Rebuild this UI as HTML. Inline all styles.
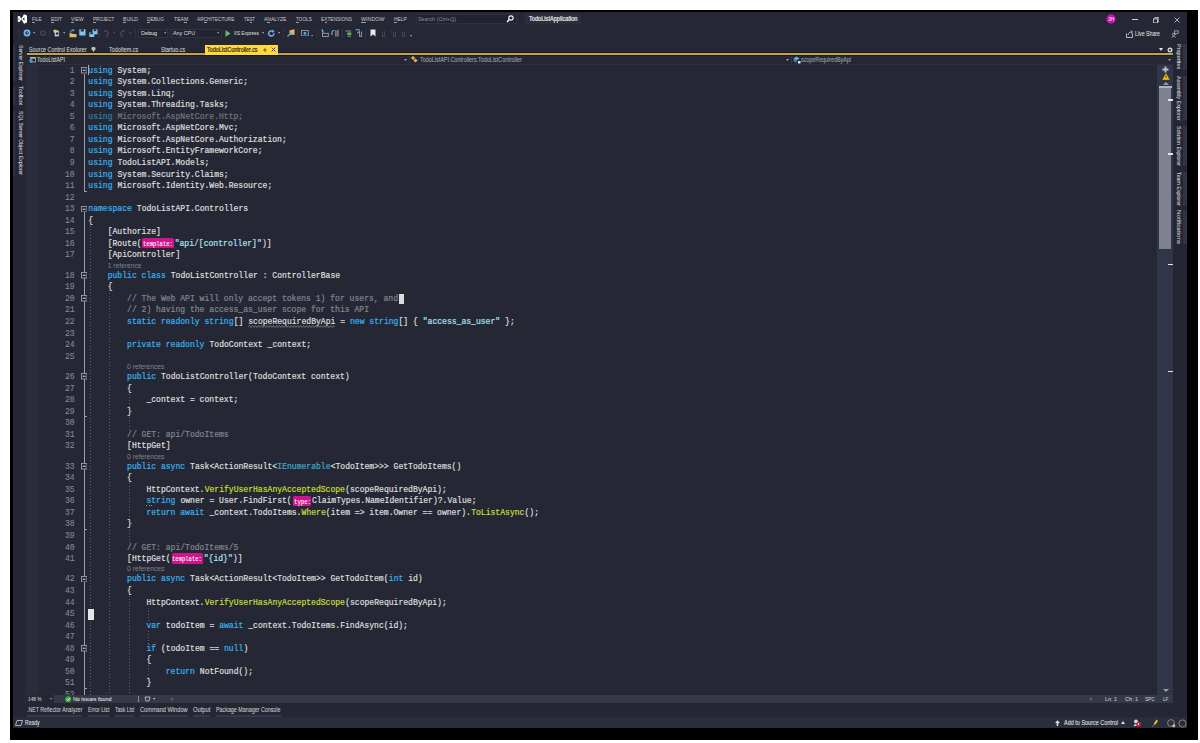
<!DOCTYPE html><html><head><meta charset="utf-8"><style>
html,body{margin:0;padding:0;background:#fff;width:1200px;height:743px;overflow:hidden;position:relative;font-family:'Liberation Sans',sans-serif}
.R,.L,.S,.C,.N,.H,.CL,.clip{position:absolute}
.clip{overflow:hidden}
.L{white-space:nowrap;line-height:1;transform-origin:0 0;-webkit-text-stroke:0.06px currentColor}
.C{white-space:pre;font-family:'Liberation Mono';font-size:8.075px;line-height:1;-webkit-text-stroke:0.2px currentColor;transform-origin:0 6.19px;transform:translateY(0.4px) scaleY(1.03)}
.N{white-space:pre;font-family:'Liberation Mono';font-size:8.075px;line-height:1;color:#858a95;width:29.08px;text-align:right;-webkit-text-stroke:0.08px currentColor;transform-origin:100% 6.19px;transform:translateY(0.2px) scaleY(1.03)}
.H{height:10.2px;background:#d0158c;border-radius:1.5px;color:#fff;font-family:'Liberation Mono';font-size:6.6px;line-height:1;white-space:nowrap;overflow:hidden;-webkit-text-stroke:0.08px #fff}
.CL{white-space:nowrap;font-family:'Liberation Sans';font-size:6.7px;line-height:1;color:#80848e}
</style></head><body><div class="R" style="left:10.00px;top:10.00px;width:1188.00px;height:730.00px;background:#000;"></div>
<div class="R" style="left:13.00px;top:12.00px;width:1174.00px;height:716.00px;background:#252834;"></div>
<svg class="S" style="left:17.00px;top:14.00px" width="11" height="10" viewBox="0 0 11 10"><path d="M4.2 5.0 L7.0 0.3 L10 1.5 L10 8.5 L7.0 9.7 Z M7.4 3.2 L7.4 6.8 L5.6 5.0 Z M0.8 2.3 L2.6 2.0 L4.6 5.0 L2.6 8.0 L0.8 7.7 Z M1.6 4.2 L2.3 4.2 L2.3 5.8 L1.6 5.8 Z" fill="#fff" fill-rule="evenodd"/></svg>
<div id="L1" class="L" style="left:32.20px;top:16.35px;font-size:6.20px;color:#c8cad0;font-weight:normal;font-family:'Liberation Sans';transform:scaleX(0.7341);-webkit-text-stroke:0;">FILE</div>
<div class="R" style="left:32.49px;top:21.70px;width:2.18px;height:0.70px;background:#9a9ea8;"></div>
<div id="L2" class="L" style="left:51.00px;top:16.35px;font-size:6.20px;color:#c8cad0;font-weight:normal;font-family:'Liberation Sans';transform:scaleX(0.7796);-webkit-text-stroke:0;">EDIT</div>
<div class="R" style="left:51.30px;top:21.70px;width:2.63px;height:0.70px;background:#9a9ea8;"></div>
<div id="L3" class="L" style="left:70.80px;top:16.35px;font-size:6.20px;color:#c8cad0;font-weight:normal;font-family:'Liberation Sans';transform:scaleX(0.8024);-webkit-text-stroke:0;">VIEW</div>
<div class="R" style="left:71.10px;top:21.70px;width:2.72px;height:0.70px;background:#9a9ea8;"></div>
<div id="L4" class="L" style="left:92.80px;top:16.35px;font-size:6.20px;color:#c8cad0;font-weight:normal;font-family:'Liberation Sans';transform:scaleX(0.7338);-webkit-text-stroke:0;">PROJECT</div>
<div class="R" style="left:93.10px;top:21.70px;width:2.44px;height:0.70px;background:#9a9ea8;"></div>
<div id="L5" class="L" style="left:123.20px;top:16.35px;font-size:6.20px;color:#c8cad0;font-weight:normal;font-family:'Liberation Sans';transform:scaleX(0.8226);-webkit-text-stroke:0;">BUILD</div>
<div class="R" style="left:123.49px;top:21.70px;width:2.81px;height:0.70px;background:#9a9ea8;"></div>
<div id="L6" class="L" style="left:147.20px;top:16.35px;font-size:6.20px;color:#c8cad0;font-weight:normal;font-family:'Liberation Sans';transform:scaleX(0.7722);-webkit-text-stroke:0;">DEBUG</div>
<div class="R" style="left:147.49px;top:21.70px;width:2.85px;height:0.70px;background:#9a9ea8;"></div>
<div id="L7" class="L" style="left:173.50px;top:16.35px;font-size:6.20px;color:#c8cad0;font-weight:normal;font-family:'Liberation Sans';transform:scaleX(0.8312);-webkit-text-stroke:0;">TEAM</div>
<div class="R" style="left:183.80px;top:21.70px;width:3.70px;height:0.70px;background:#9a9ea8;"></div>
<div id="L8" class="L" style="left:196.80px;top:16.35px;font-size:6.20px;color:#c8cad0;font-weight:normal;font-family:'Liberation Sans';transform:scaleX(0.7714);-webkit-text-stroke:0;">ARCHITECTURE</div>
<div class="R" style="left:203.73px;top:21.70px;width:2.86px;height:0.70px;background:#9a9ea8;"></div>
<div id="L9" class="L" style="left:244.00px;top:16.35px;font-size:6.20px;color:#c8cad0;font-weight:normal;font-family:'Liberation Sans';transform:scaleX(0.6950);-webkit-text-stroke:0;">TEST</div>
<div class="R" style="left:249.79px;top:21.70px;width:2.28px;height:0.70px;background:#9a9ea8;"></div>
<div id="L10" class="L" style="left:263.80px;top:16.35px;font-size:6.20px;color:#c8cad0;font-weight:normal;font-family:'Liberation Sans';transform:scaleX(0.8072);-webkit-text-stroke:0;">ANALYZE</div>
<div class="R" style="left:267.43px;top:21.70px;width:3.02px;height:0.70px;background:#9a9ea8;"></div>
<div id="L11" class="L" style="left:296.20px;top:16.35px;font-size:6.20px;color:#c8cad0;font-weight:normal;font-family:'Liberation Sans';transform:scaleX(0.7569);-webkit-text-stroke:0;">TOOLS</div>
<div class="R" style="left:296.49px;top:21.70px;width:2.18px;height:0.70px;background:#9a9ea8;"></div>
<div id="L12" class="L" style="left:321.20px;top:16.35px;font-size:6.20px;color:#c8cad0;font-weight:normal;font-family:'Liberation Sans';transform:scaleX(0.7771);-webkit-text-stroke:0;">EXTENSIONS</div>
<div class="R" style="left:324.69px;top:21.70px;width:2.62px;height:0.70px;background:#9a9ea8;"></div>
<div id="L13" class="L" style="left:361.00px;top:16.35px;font-size:6.20px;color:#c8cad0;font-weight:normal;font-family:'Liberation Sans';transform:scaleX(0.8654);-webkit-text-stroke:0;">WINDOW</div>
<div class="R" style="left:361.30px;top:21.70px;width:4.46px;height:0.70px;background:#9a9ea8;"></div>
<div id="L14" class="L" style="left:393.80px;top:16.35px;font-size:6.20px;color:#c8cad0;font-weight:normal;font-family:'Liberation Sans';transform:scaleX(0.7853);-webkit-text-stroke:0;">HELP</div>
<div class="R" style="left:394.10px;top:21.70px;width:2.91px;height:0.70px;background:#9a9ea8;"></div>
<div class="R" style="left:415.70px;top:14.20px;width:101.00px;height:10.20px;background:#212430;border:1px solid #2e3240;box-sizing:border-box"></div>
<div id="L15" class="L" style="left:418.20px;top:16.35px;font-size:6.20px;color:#80848e;font-weight:normal;font-family:'Liberation Sans';transform:scaleX(0.8736);">Search (Ctrl+Q)</div>
<svg class="S" style="left:506.00px;top:15.00px" width="8" height="8" viewBox="0 0 8 8"><circle cx="5" cy="3" r="2.2" stroke="#fff" stroke-width="1.2" fill="none"/><path d="M3.4 4.6 L1 7" stroke="#fff" stroke-width="1.4"/></svg>
<div class="R" style="left:525.40px;top:14.00px;width:55.60px;height:10.40px;background:#2b2e3b;"></div>
<div id="L16" class="L" style="left:528.70px;top:16.38px;font-size:6.40px;color:#f0f0f0;font-weight:normal;font-family:'Liberation Sans';transform:scaleX(0.8806);-webkit-text-stroke:0.18px #f0f0f0;">TodoListApplication</div>
<svg class="S" style="left:1105.70px;top:14.20px" width="10" height="10" viewBox="0 0 10 10"><circle cx="5" cy="5" r="4.7" fill="#c414b4"/><text x="5" y="6.9" font-size="5" text-anchor="middle" fill="#fff" font-family="Liberation Sans">JH</text></svg>
<div class="R" style="left:1132.00px;top:19.20px;width:5.50px;height:0.90px;background:#d0d0d0;"></div>
<svg class="S" style="left:1152.50px;top:16.50px" width="6.5" height="6.5" viewBox="0 0 6.5 6.5"><rect x="0.6" y="1.9" width="4" height="4" fill="none" stroke="#d0d0d0" stroke-width="0.9"/><path d="M1.9 1.9 V0.6 H5.9 V4.6 H4.6" fill="none" stroke="#d0d0d0" stroke-width="0.9"/></svg>
<svg class="S" style="left:1173.50px;top:16.50px" width="6" height="6" viewBox="0 0 6 6"><path d="M0.5 0.5 L5.5 5.5 M5.5 0.5 L0.5 5.5" stroke="#d0d0d0" stroke-width="0.8"/></svg>
<div class="R" style="left:17.80px;top:29.00px;width:1.00px;height:1.00px;background:#30343f;"></div>
<div class="R" style="left:19.30px;top:30.00px;width:1.00px;height:1.00px;background:#30343f;"></div>
<div class="R" style="left:17.80px;top:31.00px;width:1.00px;height:1.00px;background:#30343f;"></div>
<div class="R" style="left:19.30px;top:32.00px;width:1.00px;height:1.00px;background:#30343f;"></div>
<div class="R" style="left:17.80px;top:33.00px;width:1.00px;height:1.00px;background:#30343f;"></div>
<div class="R" style="left:19.30px;top:34.00px;width:1.00px;height:1.00px;background:#30343f;"></div>
<div class="R" style="left:17.80px;top:35.00px;width:1.00px;height:1.00px;background:#30343f;"></div>
<div class="R" style="left:19.30px;top:36.00px;width:1.00px;height:1.00px;background:#30343f;"></div>
<div class="R" style="left:17.80px;top:37.00px;width:1.00px;height:1.00px;background:#30343f;"></div>
<div class="R" style="left:19.30px;top:38.00px;width:1.00px;height:1.00px;background:#30343f;"></div>
<svg class="S" style="left:23.00px;top:29.20px" width="8" height="8" viewBox="0 0 8 8"><circle cx="4" cy="4" r="2.6" fill="#1e2130" stroke="#72bcf2" stroke-width="1.7"/><path d="M3 4 L4.8 2.9 V5.1 Z" fill="#72bcf2"/></svg>
<svg class="S" style="left:33.30px;top:32.20px" width="2.4" height="1.8" viewBox="0 0 2.4 1.8"><path d="M0 0 H2.4 L1.2 1.8 Z" fill="#9a9ea8"/></svg>
<svg class="S" style="left:39.50px;top:30.00px" width="6" height="6" viewBox="0 0 6 6"><circle cx="3" cy="3" r="2.3" fill="none" stroke="#4a4e5a" stroke-width="1.1"/></svg>
<div class="R" style="left:49.00px;top:28.50px;width:1.00px;height:9.00px;background:#2a3450;"></div>
<svg class="S" style="left:53.00px;top:29.00px" width="7" height="8" viewBox="0 0 7 8"><path d="M3.5 1 C6.5 1 6.8 4 5.6 5 C6.8 6 6.5 7.6 3.5 7.6 C1.2 7.6 1 6 2 5.2 C1 4.2 1.5 1 3.5 1 Z" fill="#c0c2c8"/><circle cx="4.2" cy="4.5" r="1.2" fill="#252834"/><circle cx="1.8" cy="2" r="1.5" fill="#f0c870"/></svg>
<svg class="S" style="left:63.30px;top:32.20px" width="2.4" height="1.8" viewBox="0 0 2.4 1.8"><path d="M0 0 H2.4 L1.2 1.8 Z" fill="#9a9ea8"/></svg>
<svg class="S" style="left:68.50px;top:28.50px" width="8" height="9" viewBox="0 0 8 9"><path d="M0.5 4.2 H3 L3.8 5 H7.5 V8.2 H0.5 Z" fill="#e8b860"/><path d="M1.5 3.5 C1.5 2 2.5 1.2 4 1.2" fill="none" stroke="#72bcf2" stroke-width="1"/><path d="M3.8 0 L5.6 1.2 L3.8 2.4 Z" fill="#72bcf2"/></svg>
<svg class="S" style="left:79.00px;top:29.20px" width="7" height="7" viewBox="0 0 7 7"><rect x="0.3" y="0.3" width="6.2" height="6.2" fill="#7cc4f4"/><rect x="1.8" y="0.3" width="3" height="2.2" fill="#252834"/></svg>
<svg class="S" style="left:88.50px;top:28.80px" width="9" height="8.5" viewBox="0 0 9 8.5"><rect x="3.5" y="0.3" width="5" height="5" fill="#7cc4f4"/><rect x="0.3" y="3.3" width="5" height="5" fill="#7cc4f4"/><rect x="1.5" y="3.3" width="2.4" height="1.8" fill="#252834"/><rect x="4.8" y="0.3" width="2.4" height="1.8" fill="#252834"/></svg>
<div class="R" style="left:99.00px;top:28.50px;width:1.00px;height:9.00px;background:#2a3450;"></div>
<svg class="S" style="left:103.00px;top:29.00px" width="7" height="8" viewBox="0 0 7 8"><path d="M2.2 2.5 C5.5 1.8 6.5 4.5 3.5 7.5" fill="none" stroke="#4a4e5a" stroke-width="1.1"/><path d="M0.6 1.4 L3 0.6 L2.6 3.6 Z" fill="#4a4e5a"/></svg>
<svg class="S" style="left:113.30px;top:32.20px" width="2.4" height="1.8" viewBox="0 0 2.4 1.8"><path d="M0 0 H2.4 L1.2 1.8 Z" fill="#50545e"/></svg>
<svg class="S" style="left:118.50px;top:29.00px" width="7" height="8" viewBox="0 0 7 8"><path d="M4.8 2.5 C1.5 1.8 0.5 4.5 3.5 7.5" fill="none" stroke="#4a4e5a" stroke-width="1.1"/><path d="M6.4 1.4 L4 0.6 L4.4 3.6 Z" fill="#4a4e5a"/></svg>
<svg class="S" style="left:129.30px;top:32.20px" width="2.4" height="1.8" viewBox="0 0 2.4 1.8"><path d="M0 0 H2.4 L1.2 1.8 Z" fill="#50545e"/></svg>
<div class="R" style="left:135.00px;top:28.50px;width:1.00px;height:9.00px;background:#2a3450;"></div>
<div class="R" style="left:138.30px;top:28.50px;width:30.20px;height:9.00px;background:#222531;border:1px solid #30343f;box-sizing:border-box"></div>
<div id="L17" class="L" style="left:140.50px;top:29.95px;font-size:6.20px;color:#d6d6d6;font-weight:normal;font-family:'Liberation Sans';transform:scaleX(0.8775);">Debug</div>
<svg class="S" style="left:163.80px;top:32.20px" width="2.4" height="1.8" viewBox="0 0 2.4 1.8"><path d="M0 0 H2.4 L1.2 1.8 Z" fill="#9a9ea8"/></svg>
<div class="R" style="left:171.00px;top:28.50px;width:50.50px;height:9.00px;background:#222531;border:1px solid #30343f;box-sizing:border-box"></div>
<div id="L18" class="L" style="left:173.00px;top:29.95px;font-size:6.20px;color:#d6d6d6;font-weight:normal;font-family:'Liberation Sans';transform:scaleX(0.8643);">Any CPU</div>
<svg class="S" style="left:216.80px;top:32.20px" width="2.4" height="1.8" viewBox="0 0 2.4 1.8"><path d="M0 0 H2.4 L1.2 1.8 Z" fill="#9a9ea8"/></svg>
<svg class="S" style="left:224.50px;top:29.50px" width="6" height="7" viewBox="0 0 6 7"><path d="M0.5 0 L5.5 3.5 L0.5 7 Z" fill="#5cc060"/></svg>
<div id="L19" class="L" style="left:234.00px;top:29.95px;font-size:6.20px;color:#d6d6d6;font-weight:normal;font-family:'Liberation Sans';transform:scaleX(0.7901);">IIS Express</div>
<svg class="S" style="left:261.80px;top:32.20px" width="2.4" height="1.8" viewBox="0 0 2.4 1.8"><path d="M0 0 H2.4 L1.2 1.8 Z" fill="#9a9ea8"/></svg>
<svg class="S" style="left:267.50px;top:29.50px" width="7" height="7" viewBox="0 0 7 7"><path d="M5.9 3.2 A2.6 2.6 0 1 1 4.2 1.0" fill="none" stroke="#6cb8f0" stroke-width="1.4"/><path d="M3.6 -0.4 L6.6 0.9 L4.4 3.0 Z" fill="#6cb8f0"/></svg>
<svg class="S" style="left:277.80px;top:32.20px" width="2.4" height="1.8" viewBox="0 0 2.4 1.8"><path d="M0 0 H2.4 L1.2 1.8 Z" fill="#9a9ea8"/></svg>
<div class="R" style="left:283.00px;top:28.50px;width:1.00px;height:9.00px;background:#2a3450;"></div>
<svg class="S" style="left:286.50px;top:29.00px" width="8" height="8" viewBox="0 0 8 8"><path d="M2.5 1.2 H4.5 L5 0.5 H7.5 V5.8 H2.5 Z" fill="#e8b860"/><path d="M0.5 7.5 L3.6 4.4" stroke="#5aa8e0" stroke-width="1.3"/><circle cx="4" cy="4.5" r="1" fill="#5aa8e0"/></svg>
<div class="R" style="left:297.00px;top:28.50px;width:1.00px;height:9.00px;background:#2a3450;"></div>
<svg class="S" style="left:300.50px;top:29.80px" width="8" height="6.5" viewBox="0 0 8 6.5"><rect x="0.5" y="0.5" width="6.8" height="5.4" fill="#1e2130" stroke="#9a9ca4" stroke-width="0.9"/><circle cx="3.9" cy="3.2" r="1.5" fill="#5aa8e0"/></svg>
<svg class="S" style="left:310.80px;top:34.70px" width="2.4" height="1.8" viewBox="0 0 2.4 1.8"><path d="M0 0 H2.4 L1.2 1.8 Z" fill="#9a9ea8"/></svg>
<div class="R" style="left:316.00px;top:29.00px;width:1.00px;height:1.00px;background:#30343f;"></div>
<div class="R" style="left:317.50px;top:30.00px;width:1.00px;height:1.00px;background:#30343f;"></div>
<div class="R" style="left:316.00px;top:31.00px;width:1.00px;height:1.00px;background:#30343f;"></div>
<div class="R" style="left:317.50px;top:32.00px;width:1.00px;height:1.00px;background:#30343f;"></div>
<div class="R" style="left:316.00px;top:33.00px;width:1.00px;height:1.00px;background:#30343f;"></div>
<div class="R" style="left:317.50px;top:34.00px;width:1.00px;height:1.00px;background:#30343f;"></div>
<div class="R" style="left:316.00px;top:35.00px;width:1.00px;height:1.00px;background:#30343f;"></div>
<div class="R" style="left:317.50px;top:36.00px;width:1.00px;height:1.00px;background:#30343f;"></div>
<div class="R" style="left:316.00px;top:37.00px;width:1.00px;height:1.00px;background:#30343f;"></div>
<div class="R" style="left:317.50px;top:38.00px;width:1.00px;height:1.00px;background:#30343f;"></div>
<svg class="S" style="left:321.00px;top:29.00px" width="8" height="8" viewBox="0 0 8 8"><rect x="1.5" y="4.3" width="5.8" height="3.2" fill="none" stroke="#a0a2aa" stroke-width="0.9"/><path d="M1 0.5 L2.2 3.5" stroke="#6cb8f0" stroke-width="1.4"/></svg>
<svg class="S" style="left:331.00px;top:29.00px" width="8" height="8" viewBox="0 0 8 8"><path d="M1 6 V3.5 A2 2 0 0 1 3.5 1.5" fill="none" stroke="#6cb8f0" stroke-width="1.1"/><rect x="4.3" y="1.5" width="1.2" height="6" fill="#9a9ca4"/><rect x="6.3" y="0.8" width="1.2" height="6.7" fill="#9a9ca4"/></svg>
<div class="R" style="left:342.00px;top:28.50px;width:1.00px;height:9.00px;background:#2a3450;"></div>
<svg class="S" style="left:345.00px;top:29.50px" width="7" height="7" viewBox="0 0 7 7"><path d="M0.5 1 H6 M2.5 6.2 H6" stroke="#9a9ca4" stroke-width="0.9"/><rect x="2.3" y="2.4" width="4" height="2.6" fill="#62b04a"/></svg>
<svg class="S" style="left:355.00px;top:29.00px" width="8" height="8" viewBox="0 0 8 8"><path d="M1.2 1.6 A1.6 1.6 0 1 1 3 3.4 L2.4 4.6" fill="none" stroke="#5aa8e0" stroke-width="1.1"/><path d="M4.5 3 V7.5 M6.5 2.5 V7.5 M4 7.3 H7" stroke="#9a9ca4" stroke-width="0.9"/></svg>
<div class="R" style="left:365.00px;top:28.50px;width:1.00px;height:9.00px;background:#2a3450;"></div>
<svg class="S" style="left:369.50px;top:29.00px" width="6" height="8" viewBox="0 0 6 8"><path d="M0.5 0.5 H5.5 V7.5 L3 5.5 L0.5 7.5 Z" fill="#e6e6e6"/></svg>
<svg class="S" style="left:379.00px;top:29.50px" width="7" height="7" viewBox="0 0 7 7"><path d="M0.5 1.2 L1.8 2.2 M3.5 2 V6.5 M5.5 1.5 V6.5 M3 6.5 H6" stroke="#464a56" stroke-width="0.9" fill="none"/></svg>
<svg class="S" style="left:390.00px;top:29.50px" width="7" height="7" viewBox="0 0 7 7"><path d="M0.5 1.2 L1.8 2.2 M3.5 2 V6.5 M5.5 1.5 V6.5 M3 6.5 H6" stroke="#464a56" stroke-width="0.9" fill="none"/></svg>
<svg class="S" style="left:399.00px;top:29.50px" width="7" height="7" viewBox="0 0 7 7"><path d="M0.5 1.2 L1.8 2.2 M3.5 2 V6.5 M5.5 1.5 V6.5 M3 6.5 H6" stroke="#464a56" stroke-width="0.9" fill="none"/></svg>
<svg class="S" style="left:409.80px;top:35.20px" width="2.4" height="1.8" viewBox="0 0 2.4 1.8"><path d="M0 0 H2.4 L1.2 1.8 Z" fill="#9a9ea8"/></svg>
<svg class="S" style="left:1125.50px;top:30.00px" width="7" height="8" viewBox="0 0 7 8"><path d="M0.5 3.5 V7.5 H6.5 V3.5" fill="none" stroke="#c8c8c8" stroke-width="0.9"/><path d="M2 5 C2.5 2.5 4 2 6 2 M4.8 0.5 L6.5 2 L4.8 3.5" fill="none" stroke="#c8c8c8" stroke-width="0.9"/></svg>
<div id="L20" class="L" style="left:1135.00px;top:30.56px;font-size:6.90px;color:#e0e0e0;font-weight:normal;font-family:'Liberation Sans';transform:scaleX(0.7587);-webkit-text-stroke:0.05px #e0e0e0;">Live Share</div>
<svg class="S" style="left:1170.50px;top:29.50px" width="8" height="8" viewBox="0 0 8 8"><path d="M3.5 0.8 H7.2 V3.6 H5.5 L4.6 4.6 V3.6 H3.5 Z" fill="none" stroke="#c8c8c8" stroke-width="0.7"/><circle cx="2.6" cy="4.3" r="1.2" fill="none" stroke="#c8c8c8" stroke-width="0.7"/><path d="M0.6 7.6 C0.9 6 4.3 6 4.6 7.6" fill="none" stroke="#c8c8c8" stroke-width="0.7"/></svg>
<div id="L21" class="L" style="left:29.20px;top:47.08px;font-size:6.40px;color:#d6d6d6;font-weight:normal;font-family:'Liberation Sans';transform:scaleX(0.8431);">Source Control Explorer</div>
<svg class="S" style="left:91.00px;top:47.00px" width="5" height="5" viewBox="0 0 5 5"><path d="M1 0.5 H4 V3 H1 Z M2.5 3 V5" stroke="#c0c0c0" stroke-width="0.9" fill="#c0c0c0"/></svg>
<div id="L22" class="L" style="left:109.30px;top:47.08px;font-size:6.40px;color:#d6d6d6;font-weight:normal;font-family:'Liberation Sans';transform:scaleX(0.8446);">TodoItem.cs</div>
<div id="L23" class="L" style="left:160.60px;top:47.08px;font-size:6.40px;color:#d6d6d6;font-weight:normal;font-family:'Liberation Sans';transform:scaleX(0.8408);">Startup.cs</div>
<div class="R" style="left:26.80px;top:52.00px;width:1146.00px;height:3.80px;background:#141a30;"></div>
<div class="R" style="left:26.80px;top:53.00px;width:1146.00px;height:1.70px;background:#c4a33c;"></div>
<div class="R" style="left:204.80px;top:44.85px;width:73.00px;height:9.85px;background:#ffd93c;"></div>
<div id="L24" class="L" style="left:207.20px;top:46.88px;font-size:6.40px;color:#2a2410;font-weight:normal;font-family:'Liberation Sans';transform:scaleX(0.8529);-webkit-text-stroke:0.2px #2a2410;">TodoListController.cs</div>
<svg class="S" style="left:262.50px;top:48.00px" width="4" height="4" viewBox="0 0 4 4"><circle cx="2" cy="2" r="1.4" fill="#8a7a40"/><path d="M0 2 H4 M2 0 V4" stroke="#8a7a40" stroke-width="0.6"/></svg>
<svg class="S" style="left:271.00px;top:47.30px" width="5" height="5" viewBox="0 0 5 5"><path d="M0.6 0.6 L4.4 4.4 M4.4 0.6 L0.6 4.4" stroke="#4a4020" stroke-width="0.9"/></svg>
<svg class="S" style="left:1159.00px;top:47.50px" width="4" height="3" viewBox="0 0 4 3"><path d="M0 0 H4 L2 3 Z" fill="#e6e6e6"/></svg>
<svg class="S" style="left:1167.00px;top:46.60px" width="6" height="6" viewBox="0 0 6 6"><circle cx="3" cy="3" r="2.5" fill="#d8d8d8"/><circle cx="3" cy="3" r="1.1" fill="#252834"/></svg>
<div class="R" style="left:26.80px;top:55.80px;width:1146.00px;height:8.50px;background:#252834;"></div>
<div class="R" style="left:26.80px;top:64.00px;width:1146.00px;height:1.00px;background:#2c303d;"></div>
<svg class="S" style="left:28.50px;top:56.80px" width="7" height="6" viewBox="0 0 7 6"><rect x="1.6" y="0.4" width="5" height="4.6" fill="none" stroke="#c8c8c8" stroke-width="0.7"/><rect x="1.6" y="0.4" width="5" height="1.2" fill="#c8c8c8"/><circle cx="2" cy="3.9" r="1.8" fill="#38a0e0"/></svg>
<div id="L25" class="L" style="left:37.00px;top:56.97px;font-size:6.30px;color:#d0d0d0;font-weight:normal;font-family:'Liberation Sans';transform:scaleX(0.8331);">TodoListAPI</div>
<svg class="S" style="left:403.80px;top:59.00px" width="3" height="2" viewBox="0 0 3 2"><path d="M0 0 H3 L1.5 2 Z" fill="#9a9ea8"/></svg>
<div class="R" style="left:408.60px;top:55.50px;width:0.80px;height:8.50px;background:#30343f;"></div>
<svg class="S" style="left:411.00px;top:56.00px" width="7" height="7" viewBox="0 0 7 7"><rect x="0.5" y="0.5" width="3" height="3" fill="#e8b050" transform="rotate(45 2 2)"/><rect x="3" y="3" width="3" height="3" fill="#e8b050" transform="rotate(45 4.5 4.5)"/></svg>
<div id="L26" class="L" style="left:419.50px;top:56.97px;font-size:6.30px;color:#a4a8b0;font-weight:normal;font-family:'Liberation Sans';transform:scaleX(0.8605);">TodoListAPI.Controllers.TodoListController</div>
<svg class="S" style="left:786.00px;top:59.00px" width="3" height="2" viewBox="0 0 3 2"><path d="M0 0 H3 L1.5 2 Z" fill="#9a9ea8"/></svg>
<div class="R" style="left:790.60px;top:55.50px;width:0.80px;height:8.50px;background:#30343f;"></div>
<svg class="S" style="left:792.50px;top:56.00px" width="8" height="8" viewBox="0 0 8 8"><path d="M0.5 2.5 L3.5 0.5 L6.5 2.5 L3.5 4.5 Z" fill="#5ab4f0"/><path d="M0.5 2.5 V5 L3.5 7 V4.5 Z" fill="#3a84c0"/><rect x="5" y="5" width="2.5" height="2.5" fill="#e0e0e0"/></svg>
<div id="L27" class="L" style="left:801.00px;top:56.97px;font-size:6.30px;color:#a4a8b0;font-weight:normal;font-family:'Liberation Sans';transform:scaleX(0.8502);">scopeRequiredByApi</div>
<svg class="S" style="left:1168.20px;top:59.00px" width="3" height="2" viewBox="0 0 3 2"><path d="M0 0 H3 L1.5 2 Z" fill="#9a9ea8"/></svg>
<div class="R" style="left:13.00px;top:44.00px;width:13.00px;height:684.00px;background:#242733;"></div>
<div class="R" style="left:13.00px;top:44.70px;width:2.00px;height:36.00px;background:#2f3447;"></div>
<div id="L28" class="L" style="left:23.58px;top:44.70px;font-size:6.00px;color:#c4c8d0;font-family:'Liberation Sans';-webkit-text-stroke:0.1px currentColor;transform-origin:0 0;transform:rotate(90deg) scaleX(0.8588)">Server Explorer</div>
<div class="R" style="left:13.00px;top:86.00px;width:2.00px;height:19.50px;background:#2f3447;"></div>
<div id="L29" class="L" style="left:23.58px;top:86.00px;font-size:6.00px;color:#c4c8d0;font-family:'Liberation Sans';-webkit-text-stroke:0.1px currentColor;transform-origin:0 0;transform:rotate(90deg) scaleX(0.9184)">Toolbox</div>
<div class="R" style="left:13.00px;top:110.60px;width:2.00px;height:64.40px;background:#2f3447;"></div>
<div id="L30" class="L" style="left:23.58px;top:110.60px;font-size:6.00px;color:#c4c8d0;font-family:'Liberation Sans';-webkit-text-stroke:0.1px currentColor;transform-origin:0 0;transform:rotate(90deg) scaleX(0.8632)">SQL Server Object Explorer</div>
<div class="R" style="left:24.50px;top:44.00px;width:2.30px;height:684.00px;background:#262a37;"></div>
<div class="R" style="left:1173.30px;top:40.00px;width:13.70px;height:688.00px;background:#242733;"></div>
<div class="R" style="left:1182.80px;top:44.40px;width:4.20px;height:25.20px;background:#2f3447;"></div>
<div id="L31" class="L" style="left:1182.48px;top:44.40px;font-size:6.00px;color:#c4c8d0;font-family:'Liberation Sans';-webkit-text-stroke:0.1px currentColor;transform-origin:0 0;transform:rotate(90deg) scaleX(0.9211)">Properties</div>
<div class="R" style="left:1182.80px;top:75.50px;width:4.20px;height:44.50px;background:#2f3447;"></div>
<div id="L32" class="L" style="left:1182.48px;top:75.50px;font-size:6.00px;color:#c4c8d0;font-family:'Liberation Sans';-webkit-text-stroke:0.1px currentColor;transform-origin:0 0;transform:rotate(90deg) scaleX(0.8897)">Assembly Explorer</div>
<div class="R" style="left:1182.80px;top:125.80px;width:4.20px;height:39.90px;background:#2f3447;"></div>
<div id="L33" class="L" style="left:1182.48px;top:125.80px;font-size:6.00px;color:#c4c8d0;font-family:'Liberation Sans';-webkit-text-stroke:0.1px currentColor;transform-origin:0 0;transform:rotate(90deg) scaleX(0.8730)">Solution Explorer</div>
<div class="R" style="left:1182.80px;top:171.70px;width:4.20px;height:34.00px;background:#2f3447;"></div>
<div id="L34" class="L" style="left:1182.48px;top:171.70px;font-size:6.00px;color:#c4c8d0;font-family:'Liberation Sans';-webkit-text-stroke:0.1px currentColor;transform-origin:0 0;transform:rotate(90deg) scaleX(0.8788)">Team Explorer</div>
<div class="R" style="left:1182.80px;top:210.00px;width:4.20px;height:34.00px;background:#2f3447;"></div>
<div id="L35" class="L" style="left:1182.48px;top:210.00px;font-size:6.00px;color:#c4c8d0;font-family:'Liberation Sans';-webkit-text-stroke:0.1px currentColor;transform-origin:0 0;transform:rotate(90deg) scaleX(1.0402)">Notifications</div>
<div class="R" style="left:26.80px;top:65.00px;width:11.95px;height:630.00px;background:#292d3b;"></div>
<div class="R" style="left:26.80px;top:65.00px;width:1.20px;height:630.00px;background:#2b2f40;"></div>
<div class="R" style="left:1157.20px;top:65.00px;width:16.10px;height:630.00px;background:#313548;"></div>
<svg class="S" style="left:1162.00px;top:65.50px" width="7" height="7" viewBox="0 0 7 7"><path d="M3.5 0.5 V6.5 M0.5 3.5 H6.5" stroke="#c0c0c0" stroke-width="1.8"/></svg>
<svg class="S" style="left:1161.50px;top:73.00px" width="8" height="7" viewBox="0 0 8 7"><path d="M4 0.3 L7.7 6.8 H0.3 Z" fill="#f2c40f"/><rect x="3.6" y="2.5" width="0.8" height="2.5" fill="#222"/></svg>
<svg class="S" style="left:1162.50px;top:82.00px" width="6" height="3" viewBox="0 0 6 3"><path d="M0 3 L3 0 L6 3 Z" fill="#9a9ea8"/></svg>
<div class="R" style="left:1159.00px;top:86.00px;width:12.00px;height:162.80px;background:#7d818e;"></div>
<div class="R" style="left:1158.50px;top:86.00px;width:13.00px;height:2.00px;background:#b0b3bb;"></div>
<div class="R" style="left:1168.00px;top:99.30px;width:5.00px;height:1.50px;background:#e6e6e6;"></div>
<div class="R" style="left:1168.00px;top:263.50px;width:5.00px;height:1.50px;background:#e6e6e6;"></div>
<div class="R" style="left:1168.00px;top:153.00px;width:5.00px;height:1.50px;background:#e6e6e6;"></div>
<div class="R" style="left:1168.00px;top:370.50px;width:5.00px;height:1.50px;background:#e6e6e6;"></div>
<svg class="S" style="left:1162.50px;top:688.50px" width="6" height="3" viewBox="0 0 6 3"><path d="M0 0 L6 0 L3 3 Z" fill="#9a9ea8"/></svg>
<div class="clip" style="left:26.8px;top:65px;width:1130.4px;height:630px">
<div class="R" style="left:63.20px;top:160.98px;width:1.00px;height:474.02px;background:repeating-linear-gradient(#6c707c 0 1px, transparent 1px 3px);opacity:0.8"></div>
<div class="R" style="left:82.40px;top:227.53px;width:1.00px;height:407.47px;background:repeating-linear-gradient(#6c707c 0 1px, transparent 1px 3px);opacity:0.8"></div>
<div class="R" style="left:101.80px;top:328.73px;width:1.00px;height:13.10px;background:repeating-linear-gradient(#6c707c 0 1px, transparent 1px 3px);opacity:0.8"></div>
<div class="R" style="left:101.80px;top:351.84px;width:1.00px;height:13.10px;background:repeating-linear-gradient(#6c707c 0 1px, transparent 1px 3px);opacity:0.8"></div>
<div class="R" style="left:101.80px;top:418.39px;width:1.00px;height:36.21px;background:repeating-linear-gradient(#6c707c 0 1px, transparent 1px 3px);opacity:0.8"></div>
<div class="R" style="left:101.80px;top:464.59px;width:1.00px;height:13.10px;background:repeating-linear-gradient(#6c707c 0 1px, transparent 1px 3px);opacity:0.8"></div>
<div class="R" style="left:101.80px;top:531.14px;width:1.00px;height:103.86px;background:repeating-linear-gradient(#6c707c 0 1px, transparent 1px 3px);opacity:0.8"></div>
<div class="R" style="left:121.20px;top:542.70px;width:1.00px;height:13.10px;background:repeating-linear-gradient(#6c707c 0 1px, transparent 1px 3px);opacity:0.8"></div>
<div class="R" style="left:121.20px;top:565.80px;width:1.00px;height:13.10px;background:repeating-linear-gradient(#6c707c 0 1px, transparent 1px 3px);opacity:0.8"></div>
<div class="R" style="left:121.20px;top:600.46px;width:1.00px;height:13.10px;background:repeating-linear-gradient(#6c707c 0 1px, transparent 1px 3px);opacity:0.8"></div>
<div class="R" style="left:57.30px;top:8.80px;width:1.00px;height:117.02px;background:#9a9ea8;"></div>
<div class="R" style="left:57.30px;top:125.82px;width:2.90px;height:1.00px;background:#9a9ea8;"></div>
<div class="R" style="left:57.30px;top:147.42px;width:1.00px;height:487.58px;background:#9a9ea8;"></div>
<div class="R" style="left:57.30px;top:351.34px;width:2.90px;height:1.00px;background:#9a9ea8;"></div>
<div class="R" style="left:57.30px;top:464.09px;width:2.90px;height:1.00px;background:#9a9ea8;"></div>
<div class="R" style="left:57.30px;top:125.82px;width:2.90px;height:1.00px;background:#9a9ea8;"></div>
<div class="R" style="left:57.30px;top:623.06px;width:2.90px;height:1.00px;background:#9a9ea8;"></div>
<svg class="S" style="left:54.20px;top:2.00px" width="6.5" height="6.5" viewBox="0 0 6.5 6.5"><rect x="0.5" y="0.5" width="5.5" height="5.5" fill="#252834" stroke="#9a9ea8" stroke-width="0.9"/><path d="M1.8 3.25 H4.7" stroke="#d8d8d8" stroke-width="1"/></svg>
<svg class="S" style="left:54.20px;top:140.62px" width="6.5" height="6.5" viewBox="0 0 6.5 6.5"><rect x="0.5" y="0.5" width="5.5" height="5.5" fill="#252834" stroke="#9a9ea8" stroke-width="0.9"/><path d="M1.8 3.25 H4.7" stroke="#d8d8d8" stroke-width="1"/></svg>
<svg class="S" style="left:54.20px;top:207.17px" width="6.5" height="6.5" viewBox="0 0 6.5 6.5"><rect x="0.5" y="0.5" width="5.5" height="5.5" fill="#252834" stroke="#9a9ea8" stroke-width="0.9"/><path d="M1.8 3.25 H4.7" stroke="#d8d8d8" stroke-width="1"/></svg>
<svg class="S" style="left:54.20px;top:230.28px" width="6.5" height="6.5" viewBox="0 0 6.5 6.5"><rect x="0.5" y="0.5" width="5.5" height="5.5" fill="#252834" stroke="#9a9ea8" stroke-width="0.9"/><path d="M1.8 3.25 H4.7" stroke="#d8d8d8" stroke-width="1"/></svg>
<svg class="S" style="left:54.20px;top:308.38px" width="6.5" height="6.5" viewBox="0 0 6.5 6.5"><rect x="0.5" y="0.5" width="5.5" height="5.5" fill="#252834" stroke="#9a9ea8" stroke-width="0.9"/><path d="M1.8 3.25 H4.7" stroke="#d8d8d8" stroke-width="1"/></svg>
<svg class="S" style="left:54.20px;top:398.03px" width="6.5" height="6.5" viewBox="0 0 6.5 6.5"><rect x="0.5" y="0.5" width="5.5" height="5.5" fill="#252834" stroke="#9a9ea8" stroke-width="0.9"/><path d="M1.8 3.25 H4.7" stroke="#d8d8d8" stroke-width="1"/></svg>
<svg class="S" style="left:54.20px;top:510.79px" width="6.5" height="6.5" viewBox="0 0 6.5 6.5"><rect x="0.5" y="0.5" width="5.5" height="5.5" fill="#252834" stroke="#9a9ea8" stroke-width="0.9"/><path d="M1.8 3.25 H4.7" stroke="#d8d8d8" stroke-width="1"/></svg>
<svg class="S" style="left:54.20px;top:580.10px" width="6.5" height="6.5" viewBox="0 0 6.5 6.5"><rect x="0.5" y="0.5" width="5.5" height="5.5" fill="#252834" stroke="#9a9ea8" stroke-width="0.9"/><path d="M1.8 3.25 H4.7" stroke="#d8d8d8" stroke-width="1"/></svg>
<div class="N" style="top:1.61px;left:18.72px">1</div><div class="C" style="left:61.55px;top:1.61px;color:#36b2ee">using</div><div class="C" style="left:85.78px;top:1.61px;color:#dedede"> System;</div><div class="N" style="top:13.16px;left:18.72px">2</div><div class="C" style="left:61.55px;top:13.16px;color:#36b2ee">using</div><div class="C" style="left:85.78px;top:13.16px;color:#dedede"> System.Collections.Generic;</div><div class="N" style="top:24.71px;left:18.72px">3</div><div class="C" style="left:61.55px;top:24.71px;color:#36b2ee">using</div><div class="C" style="left:85.78px;top:24.71px;color:#dedede"> System.Linq;</div><div class="N" style="top:36.27px;left:18.72px">4</div><div class="C" style="left:61.55px;top:36.27px;color:#36b2ee">using</div><div class="C" style="left:85.78px;top:36.27px;color:#dedede"> System.Threading.Tasks;</div><div class="N" style="top:47.82px;left:18.72px">5</div><div class="C" style="left:61.55px;top:47.82px;color:#2f7fa8">using</div><div class="C" style="left:85.78px;top:47.82px;color:#70757f"> Microsoft.AspNetCore.Http;</div><div class="N" style="top:59.37px;left:18.72px">6</div><div class="C" style="left:61.55px;top:59.37px;color:#36b2ee">using</div><div class="C" style="left:85.78px;top:59.37px;color:#dedede"> Microsoft.AspNetCore.Mvc;</div><div class="N" style="top:70.92px;left:18.72px">7</div><div class="C" style="left:61.55px;top:70.92px;color:#36b2ee">using</div><div class="C" style="left:85.78px;top:70.92px;color:#dedede"> Microsoft.AspNetCore.Authorization;</div><div class="N" style="top:82.47px;left:18.72px">8</div><div class="C" style="left:61.55px;top:82.47px;color:#36b2ee">using</div><div class="C" style="left:85.78px;top:82.47px;color:#dedede"> Microsoft.EntityFrameworkCore;</div><div class="N" style="top:94.03px;left:18.72px">9</div><div class="C" style="left:61.55px;top:94.03px;color:#36b2ee">using</div><div class="C" style="left:85.78px;top:94.03px;color:#dedede"> TodoListAPI.Models;</div><div class="N" style="top:105.58px;left:18.72px">10</div><div class="C" style="left:61.55px;top:105.58px;color:#36b2ee">using</div><div class="C" style="left:85.78px;top:105.58px;color:#dedede"> System.Security.Claims;</div><div class="N" style="top:117.13px;left:18.72px">11</div><div class="C" style="left:61.55px;top:117.13px;color:#36b2ee">using</div><div class="C" style="left:85.78px;top:117.13px;color:#dedede"> Microsoft.Identity.Web.Resource;</div><div class="N" style="top:128.68px;left:18.72px">12</div><div class="N" style="top:140.23px;left:18.72px">13</div><div class="C" style="left:61.55px;top:140.23px;color:#36b2ee">namespace</div><div class="C" style="left:105.16px;top:140.23px;color:#dedede"> TodoListAPI.Controllers</div><div class="N" style="top:151.79px;left:18.72px">14</div><div class="C" style="left:61.55px;top:151.79px;color:#dedede">{</div><div class="N" style="top:163.34px;left:18.72px">15</div><div class="C" style="left:61.55px;top:163.34px;color:#dedede">    [Authorize]</div><div class="N" style="top:174.89px;left:18.72px">16</div><div class="C" style="left:61.55px;top:174.89px;color:#dedede">    [Route(</div><div class="H" style="left:115.66px;top:173.18px;width:31.50px"><span style="position:absolute;left:0.9px;top:3.94px;transform-origin:0 0;transform:scaleX(0.839)">template:</span></div><div class="C" style="left:147.86px;top:174.89px;color:#ace0f2">&quot;api/[controller]&quot;</div><div class="C" style="left:235.08px;top:174.89px;color:#dedede">)]</div><div class="N" style="top:186.44px;left:18.72px">17</div><div class="C" style="left:61.55px;top:186.44px;color:#dedede">    [ApiController]</div><div class="CL" style="left:80.93px;top:197.86px">1 reference</div><div class="N" style="top:206.78px;left:18.72px">18</div><div class="C" style="left:61.55px;top:206.78px;color:#36b2ee">    public class</div><div class="C" style="left:139.09px;top:206.78px;color:#dedede"> TodoListController : ControllerBase</div><div class="N" style="top:218.34px;left:18.72px">19</div><div class="C" style="left:61.55px;top:218.34px;color:#dedede">    {</div><div class="N" style="top:229.89px;left:18.72px">20</div><div class="C" style="left:61.55px;top:229.89px;color:#80858f">        // The Web API will only accept tokens 1) for users, and</div><div class="N" style="top:241.44px;left:18.72px">21</div><div class="C" style="left:61.55px;top:241.44px;color:#80858f">        // 2) having the access_as_user scope for this API</div><div class="N" style="top:252.99px;left:18.72px">22</div><div class="C" style="left:61.55px;top:252.99px;color:#36b2ee">        static readonly string</div><div class="C" style="left:206.93px;top:252.99px;color:#dedede">[] scopeRequiredByApi = </div><div class="C" style="left:323.23px;top:252.99px;color:#36b2ee">new string</div><div class="C" style="left:371.69px;top:252.99px;color:#dedede">[] { </div><div class="C" style="left:395.92px;top:252.99px;color:#ace0f2">&quot;access_as_user&quot;</div><div class="C" style="left:473.46px;top:252.99px;color:#dedede"> };</div><div class="N" style="top:264.54px;left:18.72px">23</div><div class="N" style="top:276.10px;left:18.72px">24</div><div class="C" style="left:61.55px;top:276.10px;color:#36b2ee">        private readonly</div><div class="C" style="left:177.85px;top:276.10px;color:#dedede"> TodoContext _context;</div><div class="N" style="top:287.65px;left:18.72px">25</div><div class="CL" style="left:100.32px;top:299.07px">0 references</div><div class="N" style="top:307.99px;left:18.72px">26</div><div class="C" style="left:61.55px;top:307.99px;color:#36b2ee">        public</div><div class="C" style="left:129.39px;top:307.99px;color:#dedede"> TodoListController(TodoContext context)</div><div class="N" style="top:319.54px;left:18.72px">27</div><div class="C" style="left:61.55px;top:319.54px;color:#dedede">        {</div><div class="N" style="top:331.09px;left:18.72px">28</div><div class="C" style="left:61.55px;top:331.09px;color:#dedede">            _context = context;</div><div class="N" style="top:342.65px;left:18.72px">29</div><div class="C" style="left:61.55px;top:342.65px;color:#dedede">        }</div><div class="N" style="top:354.20px;left:18.72px">30</div><div class="N" style="top:365.75px;left:18.72px">31</div><div class="C" style="left:61.55px;top:365.75px;color:#80858f">        // GET: api/TodoItems</div><div class="N" style="top:377.30px;left:18.72px">32</div><div class="C" style="left:61.55px;top:377.30px;color:#dedede">        [HttpGet]</div><div class="CL" style="left:100.32px;top:388.72px">0 references</div><div class="N" style="top:397.64px;left:18.72px">33</div><div class="C" style="left:61.55px;top:397.64px;color:#36b2ee">        public async</div><div class="C" style="left:158.47px;top:397.64px;color:#dedede"> Task&lt;ActionResult&lt;</div><div class="C" style="left:250.54px;top:397.64px;color:#3aaac6">IEnumerable</div><div class="C" style="left:303.85px;top:397.64px;color:#dedede">&lt;TodoItem&gt;&gt;&gt; GetTodoItems()</div><div class="N" style="top:409.20px;left:18.72px">34</div><div class="C" style="left:61.55px;top:409.20px;color:#dedede">        {</div><div class="N" style="top:420.75px;left:18.72px">35</div><div class="C" style="left:61.55px;top:420.75px;color:#dedede">            HttpContext.</div><div class="C" style="left:177.85px;top:420.75px;color:#cadc34">VerifyUserHasAnyAcceptedScope</div><div class="C" style="left:318.39px;top:420.75px;color:#dedede">(scopeRequiredByApi);</div><div class="N" style="top:432.30px;left:18.72px">36</div><div class="C" style="left:61.55px;top:432.30px;color:#36b2ee">            string</div><div class="C" style="left:148.78px;top:432.30px;color:#dedede"> owner = User.FindFirst(</div><div class="H" style="left:265.88px;top:430.59px;width:18.60px"><span style="position:absolute;left:0.9px;top:3.94px;transform-origin:0 0;transform:scaleX(0.859)">type:</span></div><div class="C" style="left:285.18px;top:432.30px;color:#dedede">ClaimTypes.NameIdentifier)?.Value;</div><div class="N" style="top:443.85px;left:18.72px">37</div><div class="C" style="left:61.55px;top:443.85px;color:#36b2ee">            return await</div><div class="C" style="left:177.85px;top:443.85px;color:#dedede"> _context.TodoItems.</div><div class="C" style="left:274.77px;top:443.85px;color:#cadc34">Where</div><div class="C" style="left:299.00px;top:443.85px;color:#dedede">(item =&gt; item.Owner == owner).</div><div class="C" style="left:444.38px;top:443.85px;color:#cadc34">ToListAsync</div><div class="C" style="left:497.69px;top:443.85px;color:#dedede">();</div><div class="N" style="top:455.40px;left:18.72px">38</div><div class="C" style="left:61.55px;top:455.40px;color:#dedede">        }</div><div class="N" style="top:466.96px;left:18.72px">39</div><div class="N" style="top:478.51px;left:18.72px">40</div><div class="C" style="left:61.55px;top:478.51px;color:#80858f">        // GET: api/TodoItems/5</div><div class="N" style="top:490.06px;left:18.72px">41</div><div class="C" style="left:61.55px;top:490.06px;color:#dedede">        [HttpGet(</div><div class="H" style="left:144.73px;top:488.35px;width:31.50px"><span style="position:absolute;left:0.9px;top:3.94px;transform-origin:0 0;transform:scaleX(0.839)">template:</span></div><div class="C" style="left:176.93px;top:490.06px;color:#ace0f2">&quot;{id}&quot;</div><div class="C" style="left:206.01px;top:490.06px;color:#dedede">)]</div><div class="CL" style="left:100.32px;top:501.48px">0 references</div><div class="N" style="top:510.40px;left:18.72px">42</div><div class="C" style="left:61.55px;top:510.40px;color:#36b2ee">        public async</div><div class="C" style="left:158.47px;top:510.40px;color:#dedede"> Task&lt;ActionResult&lt;TodoItem&gt;&gt; GetTodoItem(</div><div class="C" style="left:362.00px;top:510.40px;color:#36b2ee">int</div><div class="C" style="left:376.54px;top:510.40px;color:#dedede"> id)</div><div class="N" style="top:521.95px;left:18.72px">43</div><div class="C" style="left:61.55px;top:521.95px;color:#dedede">        {</div><div class="N" style="top:533.51px;left:18.72px">44</div><div class="C" style="left:61.55px;top:533.51px;color:#dedede">            HttpContext.</div><div class="C" style="left:177.85px;top:533.51px;color:#cadc34">VerifyUserHasAnyAcceptedScope</div><div class="C" style="left:318.39px;top:533.51px;color:#dedede">(scopeRequiredByApi);</div><div class="N" style="top:545.06px;left:18.72px">45</div><div class="N" style="top:556.61px;left:18.72px">46</div><div class="C" style="left:61.55px;top:556.61px;color:#36b2ee">            var</div><div class="C" style="left:134.24px;top:556.61px;color:#dedede"> todoItem = </div><div class="C" style="left:192.39px;top:556.61px;color:#36b2ee">await</div><div class="C" style="left:216.62px;top:556.61px;color:#dedede"> _context.TodoItems.FindAsync(id);</div><div class="N" style="top:568.16px;left:18.72px">47</div><div class="N" style="top:579.71px;left:18.72px">48</div><div class="C" style="left:61.55px;top:579.71px;color:#36b2ee">            if</div><div class="C" style="left:129.39px;top:579.71px;color:#dedede"> (todoItem == </div><div class="C" style="left:197.24px;top:579.71px;color:#36b2ee">null</div><div class="C" style="left:216.62px;top:579.71px;color:#dedede">)</div><div class="N" style="top:591.27px;left:18.72px">49</div><div class="C" style="left:61.55px;top:591.27px;color:#dedede">            {</div><div class="N" style="top:602.82px;left:18.72px">50</div><div class="C" style="left:61.55px;top:602.82px;color:#36b2ee">                return</div><div class="C" style="left:168.16px;top:602.82px;color:#dedede"> NotFound();</div><div class="N" style="top:614.37px;left:18.72px">51</div><div class="C" style="left:61.55px;top:614.37px;color:#dedede">            }</div><div class="N" style="top:625.92px;left:18.72px">52</div>
<svg class="S" style="left:221.47px;top:259.68px" width="87.228" height="3" viewBox="0 0 87.228 3"><path d="M0 1.5 L1.5 0.5 L3.0 2.5 L4.5 0.5 L6.0 2.5 L7.5 0.5 L9.0 2.5 L10.5 0.5 L12.0 2.5 L13.5 0.5 L15.0 2.5 L16.5 0.5 L18.0 2.5 L19.5 0.5 L21.0 2.5 L22.5 0.5 L24.0 2.5 L25.5 0.5 L27.0 2.5 L28.5 0.5 L30.0 2.5 L31.5 0.5 L33.0 2.5 L34.5 0.5 L36.0 2.5 L37.5 0.5 L39.0 2.5 L40.5 0.5 L42.0 2.5 L43.5 0.5 L45.0 2.5 L46.5 0.5 L48.0 2.5 L49.5 0.5 L51.0 2.5 L52.5 0.5 L54.0 2.5 L55.5 0.5 L57.0 2.5 L58.5 0.5 L60.0 2.5 L61.5 0.5 L63.0 2.5 L64.5 0.5 L66.0 2.5 L67.5 0.5 L69.0 2.5 L70.5 0.5 L72.0 2.5 L73.5 0.5 L75.0 2.5 L76.5 0.5 L78.0 2.5 L79.5 0.5 L81.0 2.5 L82.5 0.5 L84.0 2.5 L85.5 0.5 L87.0 2.5" stroke="#8a8e98" stroke-width="0.7" fill="none"/></svg>
<div class="R" style="left:119.20px;top:439.99px;width:1.20px;height:0.80px;background:#9a9ea8;"></div>
<div class="R" style="left:121.80px;top:439.99px;width:1.20px;height:0.80px;background:#9a9ea8;"></div>
<div class="R" style="left:124.40px;top:439.99px;width:1.20px;height:0.80px;background:#9a9ea8;"></div>
<div class="R" style="left:61.30px;top:-0.40px;width:1.40px;height:10.80px;background:#a8abb2;"></div>
<div class="R" style="left:372.20px;top:228.68px;width:5.20px;height:10.20px;background:#dcdcdc;"></div>
<div class="R" style="left:61.10px;top:543.85px;width:5.85px;height:11.20px;background:#e6e6e6;"></div>
</div>
<div class="R" style="left:26.80px;top:694.60px;width:1146.50px;height:8.40px;background:#343849;"></div>
<div class="R" style="left:26.80px;top:694.60px;width:27.20px;height:8.40px;background:#252834;"></div>
<div id="L36" class="L" style="left:28.20px;top:696.22px;font-size:6.00px;color:#d0d0d0;font-weight:normal;font-family:'Liberation Sans';transform:scaleX(0.7934);">148 %</div>
<svg class="S" style="left:50.30px;top:698.20px" width="2.4" height="1.8" viewBox="0 0 2.4 1.8"><path d="M0 0 H2.4 L1.2 1.8 Z" fill="#9a9ea8"/></svg>
<svg class="S" style="left:65.00px;top:696.00px" width="6.5" height="6.5" viewBox="0 0 6.5 6.5"><circle cx="3.25" cy="3.25" r="3" fill="#3cae3c"/><path d="M1.6 3.3 L2.8 4.5 L4.9 2.1" stroke="#fff" stroke-width="0.9" fill="none"/></svg>
<div id="L37" class="L" style="left:72.80px;top:696.22px;font-size:6.00px;color:#e0e0e0;font-weight:normal;font-family:'Liberation Sans';transform:scaleX(0.8924);">No issues found</div>
<div class="R" style="left:138.00px;top:696.00px;width:1.00px;height:6.00px;background:#8a8e98;"></div>
<svg class="S" style="left:144.00px;top:695.80px" width="7" height="6" viewBox="0 0 7 6"><path d="M1 1 L6 1 L5 5 L2 5 Z" fill="none" stroke="#c0c0c0" stroke-width="0.9"/></svg>
<svg class="S" style="left:153.00px;top:698.20px" width="2.4" height="1.8" viewBox="0 0 2.4 1.8"><path d="M0 0 H2.4 L1.2 1.8 Z" fill="#d0d0d0"/></svg>
<svg class="S" style="left:169.50px;top:697.00px" width="3" height="4" viewBox="0 0 3 4"><path d="M3 0 L0 2 L3 4 Z" fill="#5a5e6a"/></svg>
<svg class="S" style="left:1090.00px;top:697.00px" width="3" height="4" viewBox="0 0 3 4"><path d="M0 0 L3 2 L0 4 Z" fill="#5a5e6a"/></svg>
<div id="L38" class="L" style="left:1105.00px;top:696.22px;font-size:6.00px;color:#d0d0d0;font-weight:normal;font-family:'Liberation Sans';transform:scaleX(0.8982);">Ln: 1</div>
<div id="L39" class="L" style="left:1124.50px;top:696.22px;font-size:6.00px;color:#d0d0d0;font-weight:normal;font-family:'Liberation Sans';transform:scaleX(0.9063);">Ch: 1</div>
<div id="L40" class="L" style="left:1145.00px;top:696.22px;font-size:6.00px;color:#d0d0d0;font-weight:normal;font-family:'Liberation Sans';transform:scaleX(0.7696);">SPC</div>
<div id="L41" class="L" style="left:1163.00px;top:696.22px;font-size:6.00px;color:#d0d0d0;font-weight:normal;font-family:'Liberation Sans';transform:scaleX(0.7840);">LF</div>
<div class="R" style="left:13.00px;top:703.00px;width:1160.30px;height:14.30px;background:#242733;"></div>
<div id="L42" class="L" style="left:26.70px;top:706.73px;font-size:6.70px;color:#d0d0d0;font-weight:normal;font-family:'Liberation Sans';transform:scaleX(0.7789);">.NET Reflector Analyzer</div>
<div class="R" style="left:26.70px;top:714.80px;width:55.50px;height:2.00px;background:#343849;"></div>
<div id="L43" class="L" style="left:87.80px;top:706.73px;font-size:6.70px;color:#d0d0d0;font-weight:normal;font-family:'Liberation Sans';transform:scaleX(0.7885);">Error List</div>
<div class="R" style="left:87.80px;top:714.80px;width:21.40px;height:2.00px;background:#343849;"></div>
<div id="L44" class="L" style="left:114.80px;top:706.73px;font-size:6.70px;color:#d0d0d0;font-weight:normal;font-family:'Liberation Sans';transform:scaleX(0.7457);">Task List</div>
<div class="R" style="left:114.80px;top:714.80px;width:19.40px;height:2.00px;background:#343849;"></div>
<div id="L45" class="L" style="left:140.00px;top:706.73px;font-size:6.70px;color:#d0d0d0;font-weight:normal;font-family:'Liberation Sans';transform:scaleX(0.8425);">Command Window</div>
<div class="R" style="left:140.00px;top:714.80px;width:47.60px;height:2.00px;background:#343849;"></div>
<div id="L46" class="L" style="left:193.20px;top:706.73px;font-size:6.70px;color:#d0d0d0;font-weight:normal;font-family:'Liberation Sans';transform:scaleX(0.8616);">Output</div>
<div class="R" style="left:193.20px;top:714.80px;width:17.30px;height:2.00px;background:#343849;"></div>
<div id="L47" class="L" style="left:216.00px;top:706.73px;font-size:6.70px;color:#d0d0d0;font-weight:normal;font-family:'Liberation Sans';transform:scaleX(0.7995);">Package Manager Console</div>
<div class="R" style="left:216.00px;top:714.80px;width:64.50px;height:2.00px;background:#343849;"></div>
<div class="R" style="left:13.00px;top:717.30px;width:1174.00px;height:10.70px;background:#2a2e3c;"></div>
<svg class="S" style="left:15.00px;top:719.50px" width="8" height="6" viewBox="0 0 8 6"><path d="M2 0.5 H7.5 L6 5.5 H0.5 Z" fill="none" stroke="#d0d0d0" stroke-width="0.8"/></svg>
<div id="L48" class="L" style="left:25.20px;top:719.81px;font-size:6.60px;color:#e0e0e0;font-weight:normal;font-family:'Liberation Sans';transform:scaleX(0.7659);">Ready</div>
<svg class="S" style="left:1054.50px;top:719.50px" width="5" height="6" viewBox="0 0 5 6"><path d="M2.5 0.3 L5 3 H3.3 V6 H1.7 V3 H0 Z" fill="#e0e0e0"/></svg>
<div id="L49" class="L" style="left:1064.00px;top:719.81px;font-size:6.60px;color:#e6e6e6;font-weight:normal;font-family:'Liberation Sans';transform:scaleX(0.8322);">Add to Source Control</div>
<svg class="S" style="left:1120.50px;top:721.00px" width="4" height="3" viewBox="0 0 4 3"><path d="M0 3 L2 0 L4 3 Z" fill="#e0e0e0"/></svg>
<svg class="S" style="left:1133.00px;top:719.00px" width="8" height="8" viewBox="0 0 8 8"><circle cx="3" cy="2.5" r="2" fill="#d8d8d8"/><path d="M0.5 7 C1 4.5 5 4.5 5.5 7" fill="#d8d8d8"/><circle cx="5.5" cy="5.5" r="2.4" fill="#d0203a"/><rect x="5.1" y="4" width="0.8" height="2" fill="#fff"/></svg>
<svg class="S" style="left:1152.00px;top:719.00px" width="7" height="8" viewBox="0 0 7 8"><path d="M4.5 0.5 L6 2 L3 6 L1.8 4.8 Z" fill="#f0c420"/><path d="M0.5 7.5 L2.2 5.5" stroke="#9a9ea8" stroke-width="0.9"/></svg>
<svg class="S" style="left:1166.50px;top:718.50px" width="9" height="9" viewBox="0 0 9 9"><circle cx="4" cy="4" r="3.4" fill="#2e2e2e" stroke="#9a9a9a" stroke-width="0.8"/><circle cx="6.8" cy="6.8" r="1.5" fill="#c0c0c0"/></svg>
<svg class="S" style="left:1177.50px;top:718.50px" width="9" height="9" viewBox="0 0 9 9"><circle cx="4.5" cy="4.5" r="3.6" fill="#2e2e2e" stroke="#9a9a9a" stroke-width="0.8"/></svg></body></html>
